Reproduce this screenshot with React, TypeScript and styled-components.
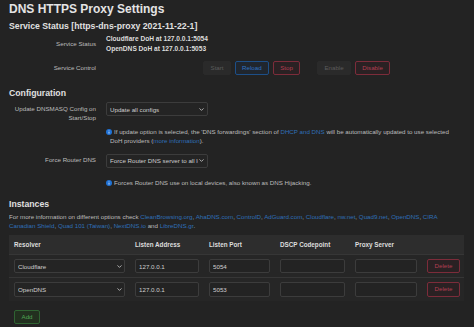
import React from "react";
import styled, { createGlobalStyle, css } from "styled-components";

const GlobalStyle = createGlobalStyle`
  html, body {
    margin: 0;
    padding: 0;
    background: #232323;
  }
  body {
    font-family: "Liberation Sans", Arial, Helvetica, sans-serif;
    color: #c8c8c8;
  }
  * {
    box-sizing: border-box;
  }
`;

type Variant = "muted" | "primary" | "danger" | "success";

const variants = {
  muted: css`
    background: #2a2a2a;
    border-color: #2a2a2a;
    color: #5c5c5c;
  `,
  primary: css`
    background: #20262e;
    border-color: #1d4f88;
    color: #2f74c4;
  `,
  danger: css`
    background: #2a2123;
    border-color: #7c2c3a;
    color: #b23f52;
  `,
  success: css`
    background: #22301f;
    border-color: #2f6332;
    color: #4fa354;
  `,
};

const Chevron = () => (
  <svg width="5" height="3" viewBox="0 0 5 3">
    <path d="M0.5 0.4 L2.5 2.4 L4.5 0.4" fill="none" stroke="#cfcfcf" strokeWidth="0.8" />
  </svg>
);

const InfoIcon = () => (
  <svg width="6" height="6" viewBox="0 0 6 6">
    <circle cx="3" cy="3" r="3" fill="#1f72d6" />
    <path d="M3 2.6 V4.6" stroke="#e8f0fb" strokeWidth="0.8" />
    <circle cx="3" cy="1.6" r="0.45" fill="#e8f0fb" />
  </svg>
);

const Select = ({ value }: { value: string }) => (
  <SelectBox>
    <span>{value}</span>
    <Chevron />
  </SelectBox>
);

const App: React.FC = () => {
  const rows = [
    { resolver: "Cloudflare", addr: "127.0.0.1", port: "5054" },
    { resolver: "OpenDNS", addr: "127.0.0.1", port: "5053" },
  ];

  return (
    <>
      <GlobalStyle />
      <Page>
        <Title>DNS HTTPS Proxy Settings</Title>

        <SectionTitle $mt={5}>Service Status [https-dns-proxy 2021-11-22-1]</SectionTitle>
        <FormRow $mt={2.4} $align="center">
          <Label>Service Status</Label>
          <StatusLines>
            <div>Cloudflare DoH at 127.0.0.1:5054</div>
            <div>OpenDNS DoH at 127.0.0.1:5053</div>
          </StatusLines>
        </FormRow>
        <FormRow $mt={7.6} $align="center">
          <Label>Service Control</Label>
          <Controls>
            <BtnGroup>
              <Button $variant="muted">Start</Button>
              <Button $variant="primary">Reload</Button>
              <Button $variant="danger">Stop</Button>
            </BtnGroup>
            <BtnGroup>
              <Button $variant="muted">Enable</Button>
              <Button $variant="danger">Disable</Button>
            </BtnGroup>
          </Controls>
        </FormRow>

        <SectionTitle $mt={12.7}>Configuration</SectionTitle>
        <FormRow $mt={3.1}>
          <Label $pt={2.8}>
            Update DNSMASQ Config on
            <br />
            Start/Stop
          </Label>
          <Field>
            <Select value="Update all configs" />
            <Help $mt={11}>
              <InfoIcon />
              If update option is selected, the 'DNS forwardings' section of{" "}
              <Link>DHCP and DNS</Link> will be automatically updated to use selected
              <br />
              DoH providers (<Link>more information</Link>).
            </Help>
          </Field>
        </FormRow>
        <FormRow $mt={8.6}>
          <Label $pt={2.4}>Force Router DNS</Label>
          <Field>
            <Select value="Force Router DNS server to all local devices" />
            <Help $mt={10.3}>
              <InfoIcon />
              Forces Router DNS use on local devices, also known as DNS Hijacking.
            </Help>
          </Field>
        </FormRow>

        <SectionTitle $mt={11.7}>Instances</SectionTitle>
        <Note>
          For more information on different options check <Link>CleanBrowsing.org</Link>,{" "}
          <Link>AhaDNS.com</Link>, <Link>ControlD</Link>, <Link>AdGuard.com</Link>,{" "}
          <Link>Cloudflare</Link>, <Link>nw.net</Link>, <Link>Quad9.net</Link>,{" "}
          <Link>OpenDNS</Link>, <Link>CIRA</Link>
          <br />
          <Link>Canadian Shield</Link>, <Link>Quad 101 (Taiwan)</Link>,{" "}
          <Link>NextDNS.io</Link> and <Link>LibreDNS.gr</Link>.
        </Note>

        <Table>
          <colgroup>
            <col style={{ width: 121 }} />
            <col style={{ width: 74 }} />
            <col style={{ width: 71 }} />
            <col style={{ width: 75 }} />
            <col style={{ width: 72 }} />
            <col style={{ width: 42 }} />
          </colgroup>
          <thead>
            <tr>
              <Th>Resolver</Th>
              <Th>Listen Address</Th>
              <Th>Listen Port</Th>
              <Th>DSCP Codepoint</Th>
              <Th>Proxy Server</Th>
              <Th />
            </tr>
          </thead>
          <tbody>
            {rows.map((r) => (
              <tr key={r.port}>
                <Td>
                  <Select value={r.resolver} />
                </Td>
                <Td>
                  <Input defaultValue={r.addr} />
                </Td>
                <Td>
                  <Input defaultValue={r.port} />
                </Td>
                <Td>
                  <Input />
                </Td>
                <Td>
                  <Input />
                </Td>
                <Td>
                  <Button $variant="danger" $w={33}>
                    Delete
                  </Button>
                </Td>
              </tr>
            ))}
          </tbody>
        </Table>

        <Actions>
          <Button $variant="success">Add</Button>
        </Actions>
      </Page>
    </>
  );
};

const Page = styled.div`
  width: 474px;
  height: 327px;
  padding: 0 10px 0 9px;
  overflow: hidden;
`;

const Title = styled.h2`
  margin: 0;
  padding-top: 2px;
  font-size: 12px;
  line-height: 14px;
  font-weight: 700;
  color: #e4e4e4;
`;

const SectionTitle = styled.h3<{ $mt: number }>`
  margin: ${(p) => p.$mt}px 0 0;
  font-size: 8.7px;
  line-height: 11px;
  font-weight: 700;
  color: #e0e0e0;
`;

const FormRow = styled.div<{ $mt: number; $align?: string }>`
  display: grid;
  grid-template-columns: 87px 1fr;
  column-gap: 10px;
  align-items: ${(p) => p.$align ?? "start"};
  margin-top: ${(p) => p.$mt}px;
`;

const Label = styled.div<{ $pt?: number }>`
  padding-top: ${(p) => p.$pt ?? 0}px;
  text-align: right;
  font-size: 6.2px;
  line-height: 8.5px;
  color: #bdbdbd;
`;

const Field = styled.div`
  display: flex;
  flex-direction: column;
  align-items: flex-start;
`;

const StatusLines = styled.div`
  font-size: 6.6px;
  line-height: 9.5px;
  font-weight: 700;
  color: #dcdcdc;
`;

const Controls = styled.div`
  display: flex;
  gap: 16.5px;
  padding-left: 97px;
`;

const BtnGroup = styled.div`
  display: flex;
  gap: 3.5px;
`;

const Button = styled.button<{ $variant: Variant; $w?: number }>`
  display: block;
  height: 14.5px;
  width: ${(p) => (p.$w ? `${p.$w}px` : "auto")};
  padding: 0 6.5px;
  border: 1px solid;
  border-radius: 2px;
  font-family: inherit;
  font-size: 6.2px;
  line-height: 1;
  ${(p) => variants[p.$variant]}
`;

const SelectBox = styled.div`
  display: flex;
  align-items: center;
  width: 101.5px;
  height: 14px;
  padding: 0 2.5px 0 3px;
  border: 1px solid #3c3c3c;
  border-radius: 2px;
  background: #242424;
  font-size: 6.2px;
  line-height: 9px;
  color: #cfcfcf;

  > span {
    flex: 1;
    overflow: hidden;
    white-space: nowrap;
  }

  > svg {
    flex: none;
    margin-left: 1px;
  }

  td & {
    width: 100%;
    height: 14.5px;
  }
`;

const Help = styled.div<{ $mt: number }>`
  margin-top: ${(p) => p.$mt}px;
  padding-left: 4px;
  text-indent: -4px;
  font-size: 6.2px;
  line-height: 9px;
  color: #bdbdbd;
  white-space: nowrap;

  > svg {
    display: inline-block;
    vertical-align: -1px;
    margin-right: 2px;
  }
`;

const Link = styled.a`
  color: #2f6fb8;
  text-decoration: none;
`;

const Note = styled.div`
  margin-top: 2.2px;
  font-size: 6.2px;
  line-height: 9.3px;
  color: #bdbdbd;
  white-space: nowrap;
`;

const Table = styled.table`
  margin-top: 4.2px;
  width: 455px;
  border-collapse: collapse;
  border-spacing: 0;
  table-layout: fixed;
  background: #262626;
`;

const Th = styled.th`
  height: 19px;
  padding: 0 5px;
  text-align: left;
  font-size: 6.3px;
  line-height: 19px;
  font-weight: 700;
  color: #dedede;
  background: #2d2d2d;
`;

const Td = styled.td`
  padding: 4px 5px;
  border-top: 1px solid #363636;
  vertical-align: middle;
  line-height: 0;
`;

const Input = styled.input`
  display: block;
  width: 100%;
  height: 14.5px;
  padding: 0 3px;
  border: 1px solid #3c3c3c;
  border-radius: 2px;
  background: #232323;
  font-family: inherit;
  font-size: 6.2px;
  color: #cfcfcf;
  outline: none;
`;

const Actions = styled.div`
  margin-top: 9px;
  padding-left: 5px;
`;

export default App;
